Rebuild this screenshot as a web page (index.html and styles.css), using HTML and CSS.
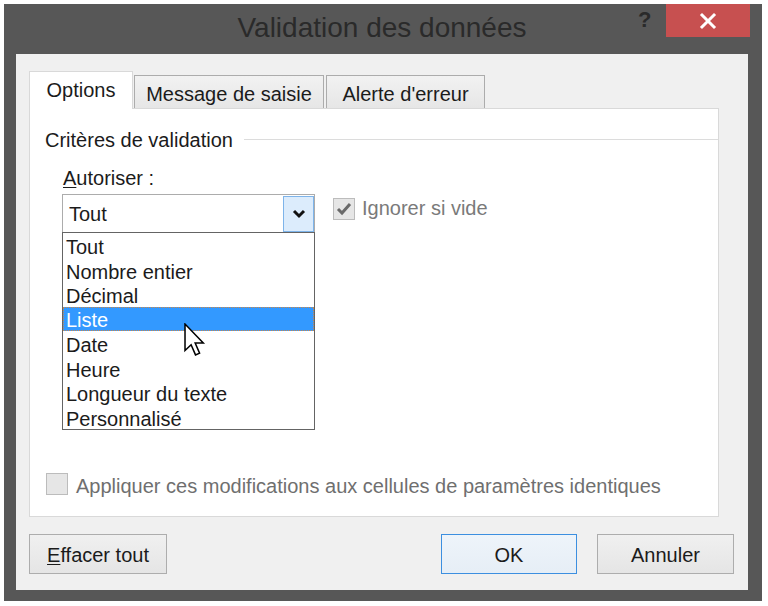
FILE: index.html
```html
<!DOCTYPE html>
<html lang="fr">
<head>
<meta charset="utf-8">
<title>Validation des données</title>
<link rel="stylesheet" href="styles.css">
</head>
<body>
<div class="window">
  <div class="titlebar">
    <span class="title">Validation des données</span>
    <span class="help">?</span>
    <span class="close">
      <svg width="18" height="18" viewBox="0 0 18 18"><path d="M3 3 L15 15 M15 3 L3 15" stroke="#fff" stroke-width="3" stroke-linecap="square"/></svg>
    </span>
  </div>
  <div class="client">
    <div class="tabs">
      <div class="tab tab-active">Options</div>
      <div class="tab tab-msg">Message de saisie</div>
      <div class="tab tab-alert">Alerte d'erreur</div>
    </div>
    <div class="panel">
      <div class="group-head">
        <span class="group-title">Critères de validation</span>
        <span class="group-line"></span>
      </div>
      <div class="allow">
        <div class="allow-col">
          <div class="label"><u>A</u>utoriser :</div>
          <div class="combo">
            <span class="combo-value">Tout</span>
            <span class="combo-btn">
              <svg width="14" height="10" viewBox="0 0 14 10"><path d="M2 2 L7 7 L12 2" fill="none" stroke="#111" stroke-width="3"/></svg>
            </span>
          </div>
          <ul class="list">
            <li>Tout</li>
            <li>Nombre entier</li>
            <li>Décimal</li>
            <li class="selected">Liste</li>
            <li>Date</li>
            <li>Heure</li>
            <li>Longueur du texte</li>
            <li>Personnalisé</li>
            <svg class="cursor" width="22" height="34" viewBox="0 0 13 20"><path d="M0.6 0.6 V16.2 L4.2 12.8 L6.8 18.8 L9.2 17.8 L6.6 11.8 H11.4 Z" fill="#fff" stroke="#000" stroke-width="0.9" stroke-linejoin="miter"/></svg>
          </ul>
        </div>
        <div class="check-row ignore">
          <span class="box checked">
            <svg width="18" height="18" viewBox="0 0 18 18"><path d="M3 9 L7 13 L15 4" fill="none" stroke="#6a6a6a" stroke-width="3"/></svg>
          </span>
          <span class="check-text">Ignorer si vide</span>
        </div>
      </div>
      <div class="check-row apply">
        <span class="box"></span>
        <span class="check-text">Appliquer ces modifications aux cellules de paramètres identiques</span>
      </div>
    </div>
    <div class="buttons">
      <button class="btn btn-clear"><u>E</u>ffacer tout</button>
      <span class="spacer"></span>
      <button class="btn btn-ok">OK</button>
      <button class="btn btn-cancel">Annuler</button>
    </div>
  </div>
</div>
</body>
</html>
```
FILE: styles.css
```css
html, body {
  margin: 0;
  padding: 0;
  background: #ffffff;
}
body {
  font-family: "Liberation Sans", Arial, sans-serif;
  font-size: 20px;
  color: #1b1b1b;
}
.window {
  margin: 4px 0 0 4px;
  width: 758px;
  height: 597px;
  box-sizing: border-box;
  background: #575757;
  padding: 0 14px 11px 12px;
  display: flex;
  flex-direction: column;
}
.titlebar {
  height: 50px;
  flex: none;
  position: relative;
  display: flex;
  align-items: center;
  justify-content: center;
  padding-bottom: 2px;
  box-sizing: border-box;
}
.title {
  font-size: 28px;
  color: #2a2a2a;
  margin-left: 0;
}
.help {
  position: absolute;
  left: 622px;
  top: 3px;
  font-size: 22px;
  font-weight: bold;
  color: #2a2a2a;
}
.close {
  position: absolute;
  left: 650px;
  top: 0;
  width: 84px;
  height: 33px;
  background: #c75050;
  display: flex;
  align-items: center;
  justify-content: center;
}
.client {
  flex: 1;
  background: #f0f0f0;
  padding: 17px 14px 16px 13px;
  display: flex;
  flex-direction: column;
}
.tabs {
  height: 37px;
  display: flex;
  align-items: flex-end;
  margin-right: 15px;
  position: relative;
  z-index: 2;
}
.tab {
  box-sizing: border-box;
  height: 33px;
  border: 1px solid #acacac;
  border-bottom: none;
  background: linear-gradient(#f2f2f2, #e6e6e6);
  display: flex;
  align-items: center;
  justify-content: center;
  padding-top: 4px;
}
.tab-active {
  width: 104px;
  height: 38px;
  margin-bottom: -1px;
  background: #ffffff;
  border-color: #d9d9d9;
  padding-top: 0;
  padding-bottom: 0;
}
.tab-msg {
  width: 190px;
  margin-left: 1px;
}
.tab-alert {
  width: 159px;
  margin-left: 2px;
}
.panel {
  height: 409px;
  box-sizing: border-box;
  margin-right: 15px;
  background: #ffffff;
  border: 1px solid #d9d9d9;
  padding: 19px 0 0 15px;
  display: flex;
  flex-direction: column;
}
.group-head {
  display: flex;
  align-items: center;
  height: 24px;
  line-height: 24px;
}
.group-line {
  flex: 1;
  height: 1px;
  background: #dcdcdc;
  margin-left: 11px;
  margin-top: -2px;
}
.allow {
  display: flex;
  align-items: flex-start;
  margin-left: 17px;
}
.allow-col {
  width: 253px;
}
.label {
  margin-top: 14px;
  margin-left: 1px;
  height: 23px;
  line-height: 24px;
}
.label u, .btn u {
  text-decoration-thickness: 1px;
  text-underline-offset: 2px;
}
.combo {
  margin-top: 5px;
  height: 38px;
  box-sizing: border-box;
  border: 1px solid #acacac;
  border-bottom: none;
  display: flex;
  align-items: center;
  padding-left: 6px;
  background: #fff;
}
.combo-value {
  flex: 1;
  padding-top: 2px;
}
.combo-btn {
  width: 31px;
  height: 36px;
  box-sizing: border-box;
  background: #dcecfc;
  border: 1px solid #7eb4ea;
  margin-right: 0;
  display: flex;
  align-items: center;
  justify-content: center;
}
.list {
  list-style: none;
  margin: 0;
  padding: 0;
  height: 198px;
  box-sizing: border-box;
  border: 1px solid #646464;
  position: relative;
  background: #fff;
}
.list li {
  height: 24.5px;
  line-height: 24.5px;
  padding-left: 3px;
  padding-top: 2px;
  box-sizing: border-box;
}
.list li.selected {
  background: #3399ff;
  color: #ffffff;
  outline: 1px dotted #c9864a;
  outline-offset: -1px;
  padding-top: 1px;
}
.cursor {
  position: absolute;
  left: 121px;
  top: 90px;
}
.check-row {
  display: flex;
  align-items: center;
  color: #7a7a7a;
}
.box {
  width: 22px;
  height: 22px;
  box-sizing: border-box;
  border: 1px solid #bcbcbc;
  background: #e6e6e6;
  display: flex;
  align-items: center;
  justify-content: center;
  flex: none;
}
.ignore {
  margin-left: 18px;
  margin-top: 45px;
}
.ignore .check-text {
  margin-left: 7px;
  margin-top: 0;
}
.apply {
  margin-top: auto;
  margin-bottom: 20px;
  margin-left: 1px;
  height: 24px;
}
.apply .check-text {
  margin-left: 8px;
  margin-top: 4px;
  color: #6f6f6f;
}
.buttons {
  margin-top: 17px;
  height: 40px;
  display: flex;
  gap: 20px;
}
.spacer {
  flex: 1;
}
.btn {
  font-family: "Liberation Sans", Arial, sans-serif;
  font-size: 20px;
  color: #1b1b1b;
  height: 40px;
  box-sizing: border-box;
  border: 1px solid #adadad;
  background: linear-gradient(#f0f0f0, #e5e5e5);
  padding: 2px 0 0;
  margin: 0;
}
.btn-clear {
  width: 138px;
}
.btn-ok {
  width: 136px;
  border-color: #3c8fe0;
  background: linear-gradient(#eef4fa, #e6eef6);
}
.btn-cancel {
  width: 137px;
}
```
